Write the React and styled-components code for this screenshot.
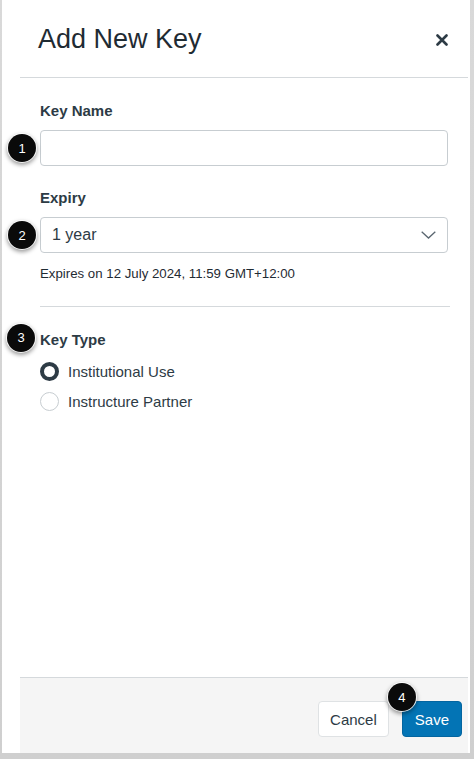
import React from "react";
import styled, { createGlobalStyle } from "styled-components";

const Global = createGlobalStyle`
  html, body { margin: 0; padding: 0; }
  body {
    background: #d2d2d2;
    font-family: "Liberation Sans", Arial, sans-serif;
    color: #2d3b45;
  }
  * { box-sizing: border-box; }
`;

const Frame = styled.div`
  width: 474px;
  height: 759px;
  padding: 0 4px 6px 2px;
  background: linear-gradient(#d9d9d9, #cfcfcf);
`;

const Panel = styled.div`
  height: 753px;
  background: #fff;
  display: flex;
  flex-direction: column;
`;

const Header = styled.div`
  height: 78px;
  margin-left: 18px;
  margin-right: 2px;
  padding: 2px 19px 0 18px;
  border-bottom: 1px solid #d5d9dc;
  display: flex;
  align-items: center;
  justify-content: space-between;
`;

const Title = styled.h1`
  margin: 0;
  font-size: 27px;
  line-height: 27px;
  font-weight: 400;
  color: #1f2b33;
`;

const Close = styled.button`
  border: 0;
  background: none;
  padding: 0;
  width: 14px;
  height: 14px;
  display: flex;
  align-items: center;
  justify-content: center;
  color: #2d3b45;
`;

const Body = styled.div`
  flex: 1;
  padding: 23px 22px 0 38px;
  display: flex;
  flex-direction: column;
`;

const Label = styled.div`
  font-size: 15px;
  line-height: 20px;
  font-weight: 700;
  color: #2d3b45;
  margin-top: ${(p) => p.$top || 0}px;
  margin-bottom: ${(p) => p.$bottom || 9}px;
  position: relative;
`;

const Field = styled.div`
  position: relative;
  height: 36px;
  border: 1px solid #c7cdd1;
  border-radius: 4px;
  background: #fff;
  display: flex;
  align-items: center;
  justify-content: space-between;
  padding: 0 11px 0 11px;
  font-size: 16px;
  color: #2d3b45;
`;

const Hint = styled.div`
  margin-top: 12px;
  font-size: 13.25px;
  line-height: 18px;
  color: #1f2b33;
`;

const Divider = styled.hr`
  margin: 23px -2px 23px 0;
  border: 0;
  border-top: 1px solid #d5d9dc;
  height: 0;
`;

const RadioRow = styled.label`
  display: flex;
  align-items: center;
  gap: 9px;
  height: 20px;
  margin-top: ${(p) => p.$top}px;
  font-size: 15px;
  color: #2d3b45;
`;

const RadioDot = styled.span`
  width: 19px;
  height: 19px;
  border-radius: 50%;
  background: #fff;
  border: ${(p) => (p.$on ? "4.5px solid #2d3b45" : "1px solid #c7cdd1")};
  flex: none;
`;

const Footer = styled.div`
  height: 76px;
  margin-left: 18px;
  margin-right: 2px;
  border-top: 1px solid #d5d9dc;
  background: #f5f5f5;
  display: flex;
  justify-content: flex-end;
  align-items: flex-start;
  gap: 13px;
  padding: 23px 6px 0 0;
`;

const Button = styled.button`
  position: relative;
  height: 36px;
  padding: 0 11px;
  border-radius: 4px;
  font-family: "Liberation Sans", Arial, sans-serif;
  font-size: 15px;
  border: 1px solid ${(p) => (p.$primary ? "#0365a0" : "#dfe2e4")};
  background: ${(p) => (p.$primary ? "#0374b5" : "#fff")};
  color: ${(p) => (p.$primary ? "#fff" : "#2d3b45")};
  ${(p) => (p.$primary ? "padding: 0 12px;" : "")}
`;

const Badge = styled.span`
  position: absolute;
  left: ${(p) => p.$x}px;
  top: ${(p) => p.$y}px;
  width: 28px;
  height: 28px;
  border-radius: 50%;
  background: #0a0a0a;
  color: #fff;
  font-family: "Liberation Sans", Arial, sans-serif;
  font-size: 13px;
  font-weight: 400;
  display: flex;
  align-items: center;
  justify-content: center;
  box-shadow: 0 0 0 1px rgba(255, 255, 255, 0.85), 0 2px 4px 1px rgba(0, 0, 0, 0.4);
  z-index: 2;
`;

export default function App() {
  return (
    <>
      <Global />
      <Frame>
        <Panel>
          <Header>
            <Title>Add New Key</Title>
            <Close aria-label="Close">
              <svg width="12" height="12" viewBox="0 0 12 12">
                <path d="M1.5 1.5 L10.5 10.5 M10.5 1.5 L1.5 10.5" stroke="#2d3b45" strokeWidth="2.6" strokeLinecap="round" />
              </svg>
            </Close>
          </Header>
          <Body>
            <Label>Key Name</Label>
            <Field>
              <Badge $x={-33} $y={3}>1</Badge>
            </Field>
            <Label $top={22}>Expiry</Label>
            <Field>
              <Badge $x={-33} $y={3}>2</Badge>
              <span>1 year</span>
              <svg width="15" height="8" viewBox="0 0 15 8">
                <path d="M0.7 0.7 L7.5 7 L14.3 0.7" fill="none" stroke="#5a6670" strokeWidth="1.3" />
              </svg>
            </Field>
            <Hint>Expires on 12 July 2024, 11:59 GMT+12:00</Hint>
            <Divider />
            <Label $bottom={11}>
              <Badge $x={-33} $y={-6}>3</Badge>
              Key Type
            </Label>
            <RadioRow $top={0}>
              <RadioDot $on />
              Institutional Use
            </RadioRow>
            <RadioRow $top={10}>
              <RadioDot />
              Instructure Partner
            </RadioRow>
          </Body>
          <Footer>
            <Button>Cancel</Button>
            <Button $primary>
              <Badge $x={-15} $y={-19}>4</Badge>
              Save
            </Button>
          </Footer>
        </Panel>
      </Frame>
    </>
  );
}
